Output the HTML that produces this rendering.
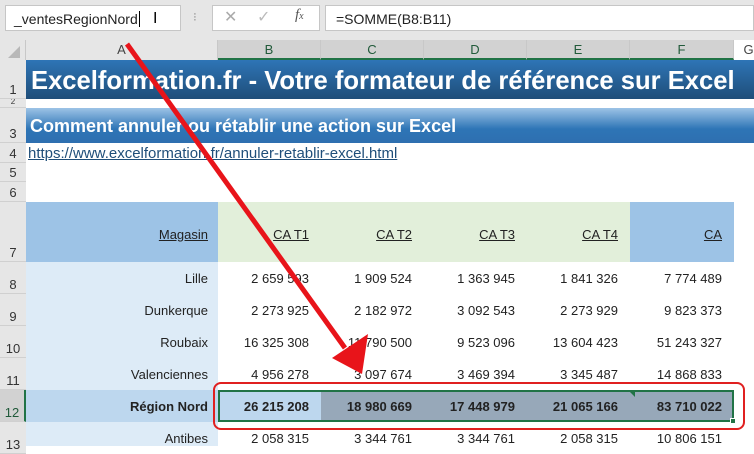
<!DOCTYPE html>
<html><head><meta charset="utf-8"><style>
*{margin:0;padding:0;box-sizing:border-box}
body{width:754px;height:446px;overflow:hidden;background:#fff;font-family:"Liberation Sans",sans-serif;position:relative}
.a{position:absolute}
.top{left:0;top:0;width:754px;height:40px;background:#e6e6e6}
.box{background:#fff;border:1px solid #c6c6c6}
.ch{top:40px;height:20px;background:#e6e6e6;border-right:1px solid #c8c8c8;font-size:13px;color:#444;text-align:center;line-height:20px}
.chs{background:#d2d2d2;border-bottom:2px solid #217346;color:#215a3a}
.rh{left:0;width:26px;background:#e6e6e6;border-bottom:1px solid #d0d0d0;font-size:13px;color:#333;text-align:center;display:flex;align-items:flex-end;justify-content:center;padding-bottom:1px}
.c{font-size:13px;color:#222;text-align:right;padding-right:12px;display:flex;align-items:center;justify-content:flex-end;height:32px}
</style></head><body>
<div class="a top"></div>
<div class="a box" style="left:5px;top:5px;width:176px;height:26px;font-size:14px;padding:5px 8px;color:#222">_ventesRegionNord<span style="border-left:1px solid #000;margin-left:1px"></span></div>
<div class="a" style="left:153px;top:10px;font-size:16px;color:#000">I</div>
<div class="a" style="left:193px;top:10px;color:#999;font-size:12px">⁝</div>
<div class="a box" style="left:212px;top:5px;width:108px;height:26px"></div>
<div class="a" style="left:224px;top:7px;color:#aaa;font-size:16px">✕</div>
<div class="a" style="left:257px;top:7px;color:#bbb;font-size:16px">✓</div>
<div class="a" style="left:295px;top:7px;color:#555;font-size:15px;font-style:italic;font-family:'Liberation Serif',serif">f<span style="font-size:10px">x</span></div>
<div class="a box" style="left:325px;top:5px;width:429px;height:26px;font-size:14px;padding:5px 10px;color:#222">=SOMME(B8:B11)</div>
<div class="a" style="left:0;top:40px;width:26px;height:20px;background:#e6e6e6;border-right:1px solid #c8c8c8"></div>
<div class="a" style="left:8px;top:46px;width:0;height:0;border-left:12px solid transparent;border-bottom:12px solid #b8b8b8"></div>
<div class="a ch" style="left:26px;width:192px">A</div>
<div class="a ch chs" style="left:218px;width:103px">B</div>
<div class="a ch chs" style="left:321px;width:103px">C</div>
<div class="a ch chs" style="left:424px;width:103px">D</div>
<div class="a ch chs" style="left:527px;width:103px">E</div>
<div class="a ch chs" style="left:630px;width:104px">F</div>
<div class="a ch" style="left:734px;width:30px;background:#fff">G</div>
<div class="a rh" style="top:60px;height:39px">1</div>
<div class="a rh" style="top:99px;height:9px;font-size:8px;overflow:hidden">2</div>
<div class="a rh" style="top:108px;height:35px">3</div>
<div class="a rh" style="top:143px;height:20px">4</div>
<div class="a rh" style="top:163px;height:19px">5</div>
<div class="a rh" style="top:182px;height:20px">6</div>
<div class="a rh" style="top:202px;height:60px">7</div>
<div class="a rh" style="top:262px;height:32px">8</div>
<div class="a rh" style="top:294px;height:32px">9</div>
<div class="a rh" style="top:326px;height:32px">10</div>
<div class="a rh" style="top:358px;height:32px">11</div>
<div class="a rh" style="top:390px;height:32px;background:#d2d2d2;border-right:2px solid #217346;color:#215a3a">12</div>
<div class="a rh" style="top:422px;height:32px">13</div>
<div class="a" style="left:26px;top:60px;width:728px;height:39px;background:linear-gradient(#2e75b6,#1f4e79);color:#fff;font-weight:bold;font-size:25.6px;padding:7px 0 0 5px;white-space:nowrap;overflow:hidden">Excelformation.fr - Votre formateur de référence sur Excel</div>
<div class="a" style="left:26px;top:108px;width:728px;height:35px;background:linear-gradient(#9dc3e6,#2e75b6 60%,#2e6fb0);color:#fff;font-weight:bold;font-size:18px;padding:8px 0 0 4px;white-space:nowrap">Comment annuler ou rétablir une action sur Excel</div>
<div class="a" style="left:28px;top:145px;font-size:15px;color:#1f4e79;text-decoration:underline">https://www.excelformation.fr/annuler-retablir-excel.html</div>
<div class="a" style="left:26px;top:202px;width:708px;border-top:1px solid #999"></div>
<div class="a" style="left:26px;top:202px;width:192px;height:60px;background:#9dc3e6"></div>
<div class="a" style="left:218px;top:202px;width:412px;height:60px;background:#e2efda"></div>
<div class="a" style="left:630px;top:202px;width:104px;height:60px;background:#9dc3e6"></div>
<div class="a" style="left:26px;top:262px;width:192px;height:184px;background:#ddebf7"></div>
<div class="a" style="left:26px;top:390px;width:192px;height:32px;background:#bdd7ee"></div>
<div class="a" style="left:218px;top:390px;width:103px;height:32px;background:#bdd7ee"></div>
<div class="a" style="left:321px;top:390px;width:413px;height:32px;background:#97a8b9"></div>
<div class="a" style="left:218px;top:390px;width:516px;height:32px;border:2px solid #217346"></div>
<div class="a" style="left:730px;top:418px;width:6px;height:6px;background:#217346;border:1px solid #fff"></div>
<div class="a" style="left:630px;top:392px;width:0;height:0;border-top:5px solid #217346;border-left:5px solid transparent"></div>
<div class="a" style="left:213px;top:382px;width:532px;height:48px;border:2px solid #e02020;border-radius:8px"></div>
<div id="t"></div>
<script>
var rows=[["<u>Magasin</u>","<u>CA T1</u>","<u>CA T2</u>","<u>CA T3</u>","<u>CA T4</u>","<u>CA</u>"],
["Lille","2 659 593","1 909 524","1 363 945","1 841 326","7 774 489"],
["Dunkerque","2 273 925","2 182 972","3 092 543","2 273 929","9 823 373"],
["Roubaix","16 325 308","11 790 500","9 523 096","13 604 423","51 243 327"],
["Valenciennes","4 956 278","3 097 674","3 469 394","3 345 487","14 868 833"],
["<b>Région Nord</b>","<b>26 215 208</b>","<b>18 980 669</b>","<b>17 448 979</b>","<b>21 065 166</b>","<b>83 710 022</b>"],
["Antibes","2 058 315","3 344 761","3 344 761","2 058 315","10 806 151"]];
var xs=[26,218,321,424,527,630],ws=[192,103,103,103,103,104],tops=[218,262,294,326,358,390,422],h="";
rows.forEach(function(r,i){r.forEach(function(v,j){h+='<div class="a c" style="left:'+xs[j]+'px;top:'+tops[i]+'px;width:'+ws[j]+'px;'+(j==0?'padding-right:10px':'')+'">'+v+'</div>'})});
document.getElementById('t').innerHTML=h;
</script>
<svg class="a" style="left:0;top:0" width="754" height="446"><line x1="127" y1="44" x2="345" y2="348" stroke="#e8141a" stroke-width="5"/><polygon points="362,374 332,358 368,334" fill="#e8141a"/></svg>
</body></html>
